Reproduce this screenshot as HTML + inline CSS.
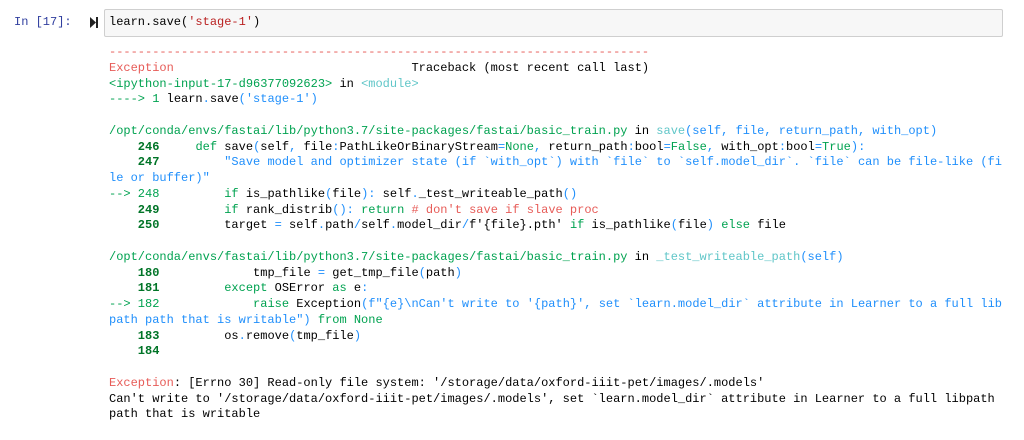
<!DOCTYPE html>
<html><head><meta charset="utf-8"><style>
body{margin:0;background:#fff;width:1024px;height:440px;overflow:hidden;position:relative;font-family:"Liberation Mono",monospace;font-size:12px;color:#000}
.prompt{position:absolute;left:14px;top:14px;color:#303f9f;line-height:16px}
.run{position:absolute;left:90px;top:17px}
.inp{position:absolute;left:104px;top:9px;width:899px;height:28px;background:#f7f7f7;border:1px solid #cfcfcf;border-radius:2px;box-sizing:border-box}
.inp pre{margin:0;position:absolute;left:4px;top:5px;line-height:16px;font:inherit}
pre.out{position:absolute;left:109px;top:45px;margin:0;font:inherit;line-height:15.75px;white-space:pre}
.r{color:#e75c58}.g{color:#00a250}.c{color:#60c6c8}.b{color:#208ffb}.n{color:#007427;font-weight:bold}.s{color:#ba2121}
</style></head><body>
<div class="prompt">In [17]:</div>
<svg class="run" width="8" height="11" viewBox="0 0 8 11"><path d="M0 0 L6 5.5 L0 11Z" fill="#222"/><rect x="6" y="0" width="2" height="11" fill="#222"/></svg>
<div class="inp"><pre>learn.save(<span class="s">'stage-1'</span>)</pre></div>
<pre class="out"><span class="r">---------------------------------------------------------------------------</span>
<span class="r">Exception</span>                                 Traceback (most recent call last)
<span class="g">&lt;ipython-input-17-d96377092623&gt;</span> in <span class="c">&lt;module&gt;</span>
<span class="g">----&gt; 1</span> learn<span class="b">.</span>save<span class="b">(</span><span class="b">'stage-1'</span><span class="b">)</span>

<span class="g">/opt/conda/envs/fastai/lib/python3.7/site-packages/fastai/basic_train.py</span> in <span class="c">save</span><span class="b">(self, file, return_path, with_opt)</span>
<span class="n">    246</span>     <span class="g">def</span> save<span class="b">(</span>self<span class="b">,</span> file<span class="b">:</span>PathLikeOrBinaryStream<span class="b">=</span><span class="g">None</span><span class="b">,</span> return_path<span class="b">:</span>bool<span class="b">=</span><span class="g">False</span><span class="b">,</span> with_opt<span class="b">:</span>bool<span class="b">=</span><span class="g">True</span><span class="b">)</span><span class="b">:</span>
<span class="n">    247</span> <span class="b">        "Save model and optimizer state (if `with_opt`) with `file` to `self.model_dir`. `file` can be file-like (fi
le or buffer)"</span>
<span class="g">--&gt; 248</span><span class="g">         </span><span class="g">if</span> is_pathlike<span class="b">(</span>file<span class="b">)</span><span class="b">:</span> self<span class="b">.</span>_test_writeable_path<span class="b">(</span><span class="b">)</span>
<span class="n">    249</span>         <span class="g">if</span> rank_distrib<span class="b">(</span><span class="b">)</span><span class="b">:</span> <span class="g">return</span> <span class="r"># don't save if slave proc</span>
<span class="n">    250</span>         target <span class="b">=</span> self<span class="b">.</span>path<span class="b">/</span>self<span class="b">.</span>model_dir<span class="b">/</span>f'{file}.pth' <span class="g">if</span> is_pathlike<span class="b">(</span>file<span class="b">)</span> <span class="g">else</span> file

<span class="g">/opt/conda/envs/fastai/lib/python3.7/site-packages/fastai/basic_train.py</span> in <span class="c">_test_writeable_path</span><span class="b">(self)</span>
<span class="n">    180</span>             tmp_file <span class="b">=</span> get_tmp_file<span class="b">(</span>path<span class="b">)</span>
<span class="n">    181</span>         <span class="g">except</span> OSError <span class="g">as</span> e<span class="b">:</span>
<span class="g">--&gt; 182</span><span class="g">             raise</span> Exception<span class="b">(f"{e}\nCan't write to '{path}', set `learn.model_dir` attribute in Learner to a full lib
path path that is writable")</span> <span class="g">from</span> <span class="g">None</span>
<span class="n">    183</span>         os<span class="b">.</span>remove<span class="b">(</span>tmp_file<span class="b">)</span>
<span class="n">    184</span>

<span class="r">Exception</span>: [Errno 30] Read-only file system: '/storage/data/oxford-iiit-pet/images/.models'
Can't write to '/storage/data/oxford-iiit-pet/images/.models', set `learn.model_dir` attribute in Learner to a full libpath
path that is writable</pre>
</body></html>
